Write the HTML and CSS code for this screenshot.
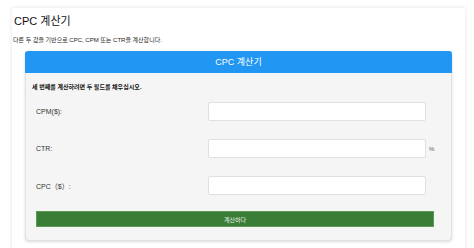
FILE: index.html
```html
<!DOCTYPE html>
<html lang="ko">
<head>
    <meta charset="UTF-8">
    <meta name="viewport" content="width=device-width, initial-scale=1.0">
    <title>CPC 계산기</title>
    <link rel="stylesheet" href="styles.css">
</head>
<body>
    <div class="page">
        <h1>CPC 계산기</h1>
        <p class="intro">다른 두 값을 기반으로 CPC, CPM 또는 CTR을 계산합니다.</p>
        <div class="calc">
            <div class="calc-head">CPC 계산기</div>
            <form class="calc-body" id="cpcForm">
                <p class="hint">세 번째를 계산하려면 두 필드를 채우십시오.</p>
                <div class="row">
                    <label for="cpm">CPM($):</label>
                    <input type="text" id="cpm">
                    <span class="unit"></span>
                </div>
                <div class="row">
                    <label for="ctr">CTR:</label>
                    <input type="text" id="ctr">
                    <span class="unit">%</span>
                </div>
                <div class="row">
                    <label for="cpc">CPC（$）:</label>
                    <input type="text" id="cpc">
                    <span class="unit"></span>
                </div>
                <button type="button">계산하다</button>
            </form>
        </div>
    </div>
</body>
</html>
```

FILE: styles.css
```css
* {
    margin: 0;
    padding: 0;
    box-sizing: border-box;
}

::-webkit-scrollbar {
    width: 8px;
}

::-webkit-scrollbar-track {
    background: #f1f1f1;
}

::-webkit-scrollbar-thumb {
    background: #c1c1c1;
}

body {
    font-family: 'Liberation Sans', Arial, 'Noto Sans CJK KR', sans-serif;
    background: #fff;
    color: #222;
}

.page {
    margin: 8px 9px 0 12px;
    padding: 6px 0 380px 1px;
    background: #fff;
    box-shadow: 0 0 4px rgba(0, 0, 0, 0.12);
}

h1 {
    font-size: 11px;
    font-weight: normal;
    line-height: 14px;
    color: #111;
    margin-left: 1px;
}

.intro {
    font-size: 6px;
    line-height: 10px;
    margin-top: 7px;
    color: #222;
}

.calc {
    margin: 6px 13px 0 12px;
    background: #f5f5f5;
    border: 1px solid #e2e2e2;
    border-radius: 4px;
    box-shadow: 0 1px 3px rgba(0, 0, 0, 0.15);
}

.calc-head {
    background: #2196f3;
    color: #fff;
    text-align: center;
    font-size: 9px;
    line-height: 22px;
    border-radius: 3px 3px 0 0;
    margin: -1px -1px 0 -1px;
}

.calc-body {
    padding: 9px 9px 13px 6px;
}

.hint {
    font-size: 6px;
    font-weight: bold;
    line-height: 10px;
    color: #111;
}

.row {
    display: grid;
    grid-template-columns: 172px 218px 8px;
    align-items: center;
    height: 19px;
    margin: 0 0 18px 4px;
}

.row:first-of-type {
    margin-top: 10px;
}

label {
    font-size: 7px;
    color: #333;
}

input {
    height: 19px;
    border: 1px solid #e0e0e0;
    border-radius: 2px;
    background: #fff;
}

.unit {
    font-size: 6px;
    color: #555;
    padding-left: 3px;
}

button {
    display: block;
    width: 398px;
    height: 16px;
    margin: -2px 0 0 4px;
    background: #3a7d36;
    color: #e8f5e8;
    border: 1px solid #5a9a52;
    font-family: inherit;
    font-size: 6px;
    cursor: pointer;
}
```
